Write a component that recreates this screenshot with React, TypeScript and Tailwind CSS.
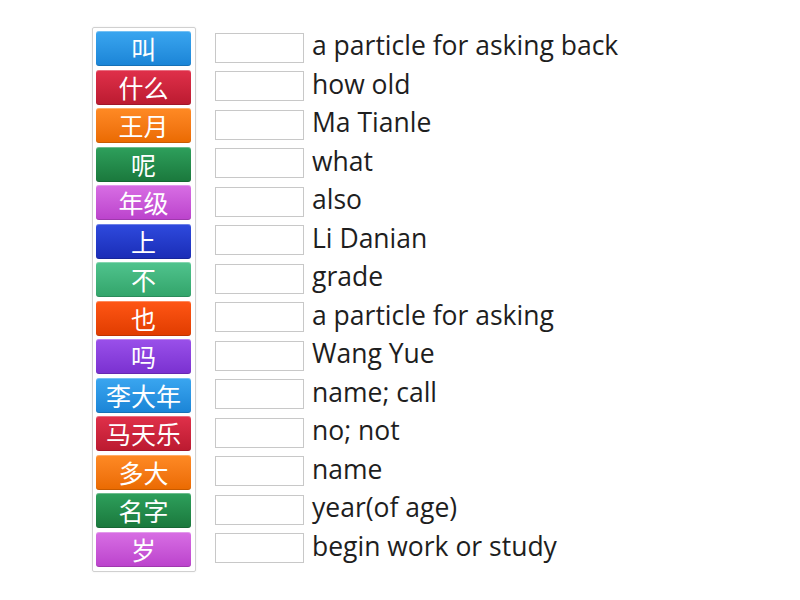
import React from "react";

const tiles: { t: string; c: string }[] = [
  { t: "叫", c: "bg-gradient-to-b from-[#3aa6f0] to-[#1a84d6]" },
  { t: "什么", c: "bg-gradient-to-b from-[#e0304a] to-[#bb1a30]" },
  { t: "王月", c: "bg-gradient-to-b from-[#ff8a24] to-[#ea6a00]" },
  { t: "呢", c: "bg-gradient-to-b from-[#2ea05c] to-[#1a783c]" },
  { t: "年级", c: "bg-gradient-to-b from-[#d86ee4] to-[#bb42cc]" },
  { t: "上", c: "bg-gradient-to-b from-[#2f4ade] to-[#1a2cb6]" },
  { t: "不", c: "bg-gradient-to-b from-[#50c48e] to-[#32a46a]" },
  { t: "也", c: "bg-gradient-to-b from-[#ff5614] to-[#e03c00]" },
  { t: "吗", c: "bg-gradient-to-b from-[#9a50ea] to-[#7a30d0]" },
  { t: "李大年", c: "bg-gradient-to-b from-[#3aa6f0] to-[#1a84d6]" },
  { t: "马天乐", c: "bg-gradient-to-b from-[#e0304a] to-[#bb1a30]" },
  { t: "多大", c: "bg-gradient-to-b from-[#ff8a24] to-[#ea6a00]" },
  { t: "名字", c: "bg-gradient-to-b from-[#2ea05c] to-[#1a783c]" },
  { t: "岁", c: "bg-gradient-to-b from-[#d86ee4] to-[#bb42cc]" },
];

const defs = [
  "a particle for asking back",
  "how old",
  "Ma Tianle",
  "what",
  "also",
  "Li Danian",
  "grade",
  "a particle for asking",
  "Wang Yue",
  "name; call",
  "no; not",
  "name",
  "year(of age)",
  "begin work or study",
];

export default function App() {
  return (
    <div className="w-[800px] h-[600px] bg-white flex items-start pt-[27px] pl-[92px]">
      <div className="border border-[#d0d0d0] rounded-[2px] pl-[3px] pr-[4px] pt-[3px] pb-[4px] flex flex-col gap-[3.5px] shadow-[0_0_2px_rgba(0,0,0,0.08)]">
        {tiles.map((x, i) => (
          <div
            key={i}
            className={`w-[95px] h-[35px] rounded-[3px] ${x.c} flex items-center justify-center text-white text-[25px] leading-none shadow-[inset_0_1px_0_rgba(255,255,255,0.3),inset_0_-1px_0_rgba(0,0,0,0.15)]`}
            style={{ fontFamily: '"Noto Sans CJK SC", "Noto Sans", sans-serif' }}
          >
            {x.t}
          </div>
        ))}
      </div>
      <div className="ml-[19px] pt-[3px] flex flex-col gap-[3.5px]">
        {defs.map((d, i) => (
          <div key={i} className="h-[35px] flex items-center">
            <div className="w-[89px] h-[30px] border border-[#c8c8c8] bg-white shrink-0" />
            <div
              className="ml-[8px] text-[26.5px] text-[#1e1e1e] whitespace-nowrap leading-none pb-[4px]"
              style={{ fontFamily: '"Open Sans", sans-serif' }}
            >
              {d}
            </div>
          </div>
        ))}
      </div>
    </div>
  );
}
